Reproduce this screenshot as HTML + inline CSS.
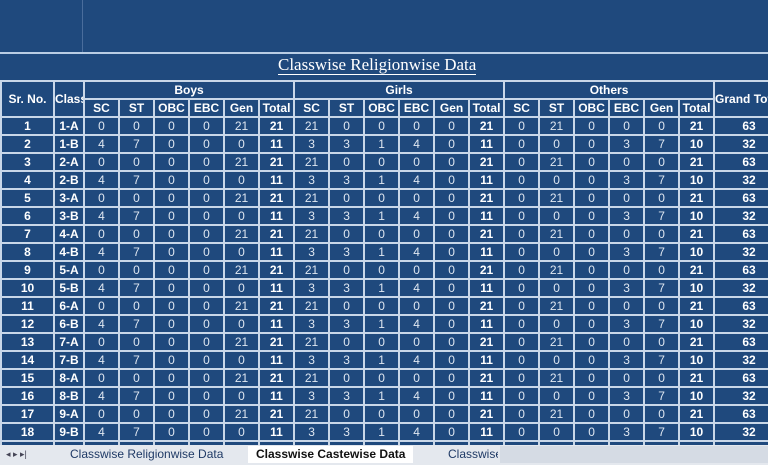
<!DOCTYPE html><html><head><style>
body{margin:0;width:768px;height:465px;overflow:hidden;background:#1f497d;font-family:"Liberation Sans",sans-serif;color:#fff;position:relative}
.vl{position:absolute;left:82px;top:0;width:1px;height:52px;background:#4a6d9c}
.hl{position:absolute;left:0;top:52px;width:768px;height:2px;background:#b9cde4}
.title{position:absolute;left:278px;top:55px;font-family:"Liberation Serif",serif;font-size:17px;color:#fff;border-bottom:1px solid #fff;line-height:19px}
table{position:absolute;left:0;top:80px;width:783px;border-collapse:collapse;table-layout:fixed;font-size:12px}
td{border:2px solid #c9d7e8;height:16px;padding:0;text-align:center;line-height:16px;overflow:hidden;white-space:nowrap;color:#dfe7f1}
td.b{font-weight:bold;color:#fff}
.h td{font-weight:bold;color:#fff}
.tabs{position:absolute;left:0;top:445px;width:768px;height:20px;background:#e4e8ee;font-size:12px;color:#1f3a66}
.tab{position:absolute;top:1px;height:17px;line-height:17px}
</style></head><body>
<div class="vl"></div><div class="hl"></div>
<div class="title">Classwise Religionwise Data</div>
<table>
<colgroup><col style="width:53px"><col style="width:30px"><col span="18" style="width:35px"><col style="width:70px"></colgroup>
<tr class="h"><td rowspan="2">Sr. No.</td><td rowspan="2">Class</td><td colspan="6">Boys</td><td colspan="6">Girls</td><td colspan="6">Others</td><td rowspan="2" style="text-align:left">Grand Total</td></tr>
<tr class="h"><td>SC</td><td>ST</td><td>OBC</td><td>EBC</td><td>Gen</td><td>Total</td><td>SC</td><td>ST</td><td>OBC</td><td>EBC</td><td>Gen</td><td>Total</td><td>SC</td><td>ST</td><td>OBC</td><td>EBC</td><td>Gen</td><td>Total</td></tr>
<tr><td class="b">1</td><td class="b">1-A</td><td>0</td><td>0</td><td>0</td><td>0</td><td>21</td><td class="b">21</td><td>21</td><td>0</td><td>0</td><td>0</td><td>0</td><td class="b">21</td><td>0</td><td>21</td><td>0</td><td>0</td><td>0</td><td class="b">21</td><td class="b">63</td></tr>
<tr><td class="b">2</td><td class="b">1-B</td><td>4</td><td>7</td><td>0</td><td>0</td><td>0</td><td class="b">11</td><td>3</td><td>3</td><td>1</td><td>4</td><td>0</td><td class="b">11</td><td>0</td><td>0</td><td>0</td><td>3</td><td>7</td><td class="b">10</td><td class="b">32</td></tr>
<tr><td class="b">3</td><td class="b">2-A</td><td>0</td><td>0</td><td>0</td><td>0</td><td>21</td><td class="b">21</td><td>21</td><td>0</td><td>0</td><td>0</td><td>0</td><td class="b">21</td><td>0</td><td>21</td><td>0</td><td>0</td><td>0</td><td class="b">21</td><td class="b">63</td></tr>
<tr><td class="b">4</td><td class="b">2-B</td><td>4</td><td>7</td><td>0</td><td>0</td><td>0</td><td class="b">11</td><td>3</td><td>3</td><td>1</td><td>4</td><td>0</td><td class="b">11</td><td>0</td><td>0</td><td>0</td><td>3</td><td>7</td><td class="b">10</td><td class="b">32</td></tr>
<tr><td class="b">5</td><td class="b">3-A</td><td>0</td><td>0</td><td>0</td><td>0</td><td>21</td><td class="b">21</td><td>21</td><td>0</td><td>0</td><td>0</td><td>0</td><td class="b">21</td><td>0</td><td>21</td><td>0</td><td>0</td><td>0</td><td class="b">21</td><td class="b">63</td></tr>
<tr><td class="b">6</td><td class="b">3-B</td><td>4</td><td>7</td><td>0</td><td>0</td><td>0</td><td class="b">11</td><td>3</td><td>3</td><td>1</td><td>4</td><td>0</td><td class="b">11</td><td>0</td><td>0</td><td>0</td><td>3</td><td>7</td><td class="b">10</td><td class="b">32</td></tr>
<tr><td class="b">7</td><td class="b">4-A</td><td>0</td><td>0</td><td>0</td><td>0</td><td>21</td><td class="b">21</td><td>21</td><td>0</td><td>0</td><td>0</td><td>0</td><td class="b">21</td><td>0</td><td>21</td><td>0</td><td>0</td><td>0</td><td class="b">21</td><td class="b">63</td></tr>
<tr><td class="b">8</td><td class="b">4-B</td><td>4</td><td>7</td><td>0</td><td>0</td><td>0</td><td class="b">11</td><td>3</td><td>3</td><td>1</td><td>4</td><td>0</td><td class="b">11</td><td>0</td><td>0</td><td>0</td><td>3</td><td>7</td><td class="b">10</td><td class="b">32</td></tr>
<tr><td class="b">9</td><td class="b">5-A</td><td>0</td><td>0</td><td>0</td><td>0</td><td>21</td><td class="b">21</td><td>21</td><td>0</td><td>0</td><td>0</td><td>0</td><td class="b">21</td><td>0</td><td>21</td><td>0</td><td>0</td><td>0</td><td class="b">21</td><td class="b">63</td></tr>
<tr><td class="b">10</td><td class="b">5-B</td><td>4</td><td>7</td><td>0</td><td>0</td><td>0</td><td class="b">11</td><td>3</td><td>3</td><td>1</td><td>4</td><td>0</td><td class="b">11</td><td>0</td><td>0</td><td>0</td><td>3</td><td>7</td><td class="b">10</td><td class="b">32</td></tr>
<tr><td class="b">11</td><td class="b">6-A</td><td>0</td><td>0</td><td>0</td><td>0</td><td>21</td><td class="b">21</td><td>21</td><td>0</td><td>0</td><td>0</td><td>0</td><td class="b">21</td><td>0</td><td>21</td><td>0</td><td>0</td><td>0</td><td class="b">21</td><td class="b">63</td></tr>
<tr><td class="b">12</td><td class="b">6-B</td><td>4</td><td>7</td><td>0</td><td>0</td><td>0</td><td class="b">11</td><td>3</td><td>3</td><td>1</td><td>4</td><td>0</td><td class="b">11</td><td>0</td><td>0</td><td>0</td><td>3</td><td>7</td><td class="b">10</td><td class="b">32</td></tr>
<tr><td class="b">13</td><td class="b">7-A</td><td>0</td><td>0</td><td>0</td><td>0</td><td>21</td><td class="b">21</td><td>21</td><td>0</td><td>0</td><td>0</td><td>0</td><td class="b">21</td><td>0</td><td>21</td><td>0</td><td>0</td><td>0</td><td class="b">21</td><td class="b">63</td></tr>
<tr><td class="b">14</td><td class="b">7-B</td><td>4</td><td>7</td><td>0</td><td>0</td><td>0</td><td class="b">11</td><td>3</td><td>3</td><td>1</td><td>4</td><td>0</td><td class="b">11</td><td>0</td><td>0</td><td>0</td><td>3</td><td>7</td><td class="b">10</td><td class="b">32</td></tr>
<tr><td class="b">15</td><td class="b">8-A</td><td>0</td><td>0</td><td>0</td><td>0</td><td>21</td><td class="b">21</td><td>21</td><td>0</td><td>0</td><td>0</td><td>0</td><td class="b">21</td><td>0</td><td>21</td><td>0</td><td>0</td><td>0</td><td class="b">21</td><td class="b">63</td></tr>
<tr><td class="b">16</td><td class="b">8-B</td><td>4</td><td>7</td><td>0</td><td>0</td><td>0</td><td class="b">11</td><td>3</td><td>3</td><td>1</td><td>4</td><td>0</td><td class="b">11</td><td>0</td><td>0</td><td>0</td><td>3</td><td>7</td><td class="b">10</td><td class="b">32</td></tr>
<tr><td class="b">17</td><td class="b">9-A</td><td>0</td><td>0</td><td>0</td><td>0</td><td>21</td><td class="b">21</td><td>21</td><td>0</td><td>0</td><td>0</td><td>0</td><td class="b">21</td><td>0</td><td>21</td><td>0</td><td>0</td><td>0</td><td class="b">21</td><td class="b">63</td></tr>
<tr><td class="b">18</td><td class="b">9-B</td><td>4</td><td>7</td><td>0</td><td>0</td><td>0</td><td class="b">11</td><td>3</td><td>3</td><td>1</td><td>4</td><td>0</td><td class="b">11</td><td>0</td><td>0</td><td>0</td><td>3</td><td>7</td><td class="b">10</td><td class="b">32</td></tr>
<tr><td class="b">19</td><td class="b">10-A</td><td>0</td><td>0</td><td>0</td><td>0</td><td>21</td><td class="b">21</td><td>21</td><td>0</td><td>0</td><td>0</td><td>0</td><td class="b">21</td><td>0</td><td>21</td><td>0</td><td>0</td><td>0</td><td class="b">21</td><td class="b">63</td></tr>
</table>
<div class="tabs">
<span class="tab" style="left:6px;font-size:9px;color:#445">◂ ▸ ▸|</span>
<span class="tab" style="left:70px">Classwise Religionwise Data</span>
<span class="tab" style="left:248px;background:#fff;font-weight:bold;padding:0 8px;color:#111">Classwise Castewise Data</span>
<span class="tab" style="left:448px;width:50px;overflow:hidden">Classwise</span>
<span class="tab" style="left:500px;width:268px;background:#d5dbe4"></span>
</div>
</body></html>
